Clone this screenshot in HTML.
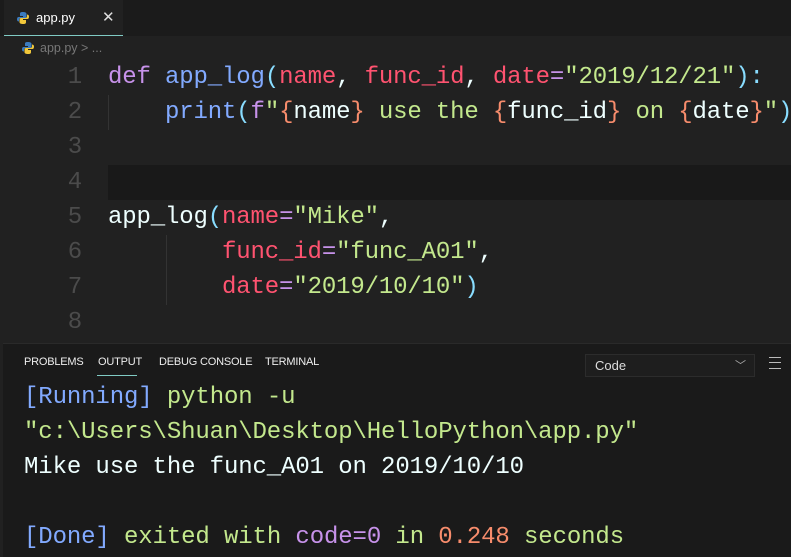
<!DOCTYPE html><html><head><style>
html,body{margin:0;width:791px;height:557px;overflow:hidden}
body{background:#212121;font-family:"Liberation Sans",sans-serif;position:relative}
.tabbar{position:absolute;left:0;top:0;width:791px;height:36px;background:#1b1b1b}
.tab{position:absolute;left:4px;top:0;width:119px;height:36px;background:#212121;border-bottom:1px solid #80cbc4;box-sizing:border-box}
.tab .n{position:absolute;left:32px;top:10px;color:#fff;font-size:13px}
.tab .x{position:absolute;left:98px;top:8px;color:#ddd;font-size:15px}
.bc{position:absolute;left:40px;top:41px;color:#777;font-size:12.5px}
.code{position:absolute;left:0;top:60px;width:791px;font-family:"Liberation Mono",monospace;font-size:24px;letter-spacing:-0.15px}
.ln{height:35px;line-height:35px;position:relative;white-space:pre;color:#eeffff}
.ln .num{position:absolute;left:40px;width:42px;text-align:right;color:#4b4b4b}
.ln .t{position:absolute;left:108px}
.cur{background:#191919}
.k{color:#c792ea}.f{color:#82aaff}.p{color:#ff5370}.s{color:#c3e88d}.b{color:#89ddff}.o{color:#f78c6c}
.panel{position:absolute;left:3px;top:343px;width:788px;height:214px;background:#1a1a1a;border-top:1px solid #2a2a2a}
.ptabs{position:absolute;top:12px;font-size:11px;color:#eee;letter-spacing:-0.2px}
.sel{position:absolute;left:582px;top:10px;width:170px;height:23px;background:#1e1e1e;border:1px solid #2c2c2c;box-sizing:border-box;color:#ddd;font-size:13px;padding:3px 9px}
.out{position:absolute;left:21px;top:36px;font-family:"Liberation Mono",monospace;font-size:24px;color:#eeffff;letter-spacing:-0.12px}
.out div{height:35px;line-height:35px;white-space:pre}
</style></head><body>
<div class="tabbar"><div class="tab">
<svg style="position:absolute;left:12px;top:11px" width="14" height="14" viewBox="0 0 14 14"><path d="M7 1C4 1 4 2 4 3v2h3v1H2.5C1 6 1 8 1 8.5 1 10 2 10.5 3 10.5V8.5C3 7.5 4 7 5 7h4c1 0 1.5-.5 1.5-1.5V3C10.5 1.5 9 1 7 1z" fill="#3b7bbf"/><path d="M7 13c3 0 3-1 3-2V9H7V8h4.5C13 8 13 6 13 5.5 13 4 12 3.5 11 3.5v2C11 6.5 10 7 9 7H5C4 7 3.5 7.5 3.5 8.5V11C3.5 12.5 5 13 7 13z" fill="#f2c83a"/></svg>
<span class="n">app.py</span><span class="x">✕</span></div></div>
<svg style="position:absolute;left:21px;top:41px" width="14" height="14" viewBox="0 0 14 14"><path d="M7 1C4 1 4 2 4 3v2h3v1H2.5C1 6 1 8 1 8.5 1 10 2 10.5 3 10.5V8.5C3 7.5 4 7 5 7h4c1 0 1.5-.5 1.5-1.5V3C10.5 1.5 9 1 7 1z" fill="#3b7bbf"/><path d="M7 13c3 0 3-1 3-2V9H7V8h4.5C13 8 13 6 13 5.5 13 4 12 3.5 11 3.5v2C11 6.5 10 7 9 7H5C4 7 3.5 7.5 3.5 8.5V11C3.5 12.5 5 13 7 13z" fill="#f2c83a"/></svg>
<div class="bc">app.py &gt; ...</div>
<div style="position:absolute;left:108px;top:95px;width:1px;height:35px;background:#333"></div>
<div style="position:absolute;left:166px;top:235px;width:1px;height:70px;background:#333"></div>
<div class="code">
<div class="ln"><span class="num">1</span><span class="t"><span class="k">def</span> <span class="f">app_log</span><span class="b">(</span><span class="p">name</span>, <span class="p">func_id</span>, <span class="p">date</span><span class="k">=</span><span class="s">"2019/12/21"</span><span class="b">):</span></span></div>
<div class="ln"><span class="num">2</span><span class="t">    <span class="f">print</span><span class="b">(</span><span class="k">f</span><span class="s">"</span><span class="o">{</span>name<span class="o">}</span><span class="s"> use the </span><span class="o">{</span>func_id<span class="o">}</span><span class="s"> on </span><span class="o">{</span>date<span class="o">}</span><span class="s">"</span><span class="b">)</span></span></div>
<div class="ln"><span class="num">3</span></div>
<div class="ln cur" style="margin-left:108px"><span class="num" style="left:-68px">4</span></div>
<div class="ln"><span class="num">5</span><span class="t">app_log<span class="b">(</span><span class="p">name</span><span class="k">=</span><span class="s">"Mike"</span>,</span></div>
<div class="ln"><span class="num">6</span><span class="t">        <span class="p">func_id</span><span class="k">=</span><span class="s">"func_A01"</span>,</span></div>
<div class="ln"><span class="num">7</span><span class="t">        <span class="p">date</span><span class="k">=</span><span class="s">"2019/10/10"</span><span class="b">)</span></span></div>
<div class="ln"><span class="num">8</span></div>
</div>
<div class="panel">
<span class="ptabs" style="left:21px">PROBLEMS</span>
<span class="ptabs" style="left:95px">OUTPUT</span>
<div style="position:absolute;left:94px;top:31px;width:40px;height:1px;background:#80cbc4"></div>
<span class="ptabs" style="left:156px">DEBUG CONSOLE</span>
<span class="ptabs" style="left:262px">TERMINAL</span>
<div class="sel">Code<span style="position:absolute;right:8px;top:2px;color:#aaa;font-size:11px">﹀</span></div>
<div style="position:absolute;left:766px;top:13px;width:12px;height:10px;border-top:1px solid #bbb;border-bottom:1px solid #bbb"><div style="margin-top:4px;height:1px;background:#bbb"></div></div>
<div class="out"><div><span class="f">[Running]</span> <span class="s">python -u</span></div><div class="s">"c:\Users\Shuan\Desktop\HelloPython\app.py"</div><div>Mike use the func_A01 on 2019/10/10</div><div> </div><div><span class="f">[Done]</span> <span class="s">exited with</span> <span class="k">code=0</span> <span class="s">in</span> <span class="o">0.248</span> <span class="s">seconds</span></div></div>
</div>
</body></html>
